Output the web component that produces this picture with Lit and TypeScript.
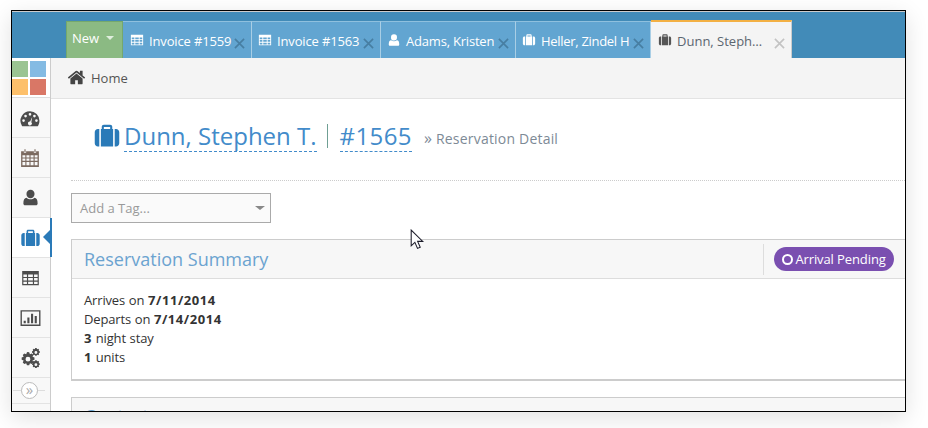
import { LitElement, html, css, svg } from "lit";
import { customElement } from "lit/decorators.js";

const table = svg`<path fill="currentColor" fill-rule="evenodd" d="M1 2h14v12H1zM2 5v2h3V5zm4 0v2h4V5zm5 0v2h3V5zM2 8v2h3V8zm4 0v2h4V8zm5 0v2h3V8zM2 11v2h3v-2zm4 0v2h4v-2zm5 0v2h3v-2z"/>`;
const user = svg`<path fill="currentColor" d="M8 1.5a3.4 3.4 0 0 1 3.4 3.6A3.4 3.4 0 0 1 8 8.600 3.4 3.4 0 0 1 4.600 5 3.400 3.400 0 0 1 8 1.500zM4.700 8.200C5.600 9 6.700 9.500 8 9.500s2.400-.5 3.300-1.300c1.800.1 2.700 1.700 2.700 4.800 0 .9-.6 1.500-1.400 1.500H3.400C2.600 14.500 2 13.900 2 13c0-3.100.9-4.700 2.700-4.800z"/>`;
const case_ = svg`<path fill="currentColor" fill-rule="evenodd" d="M5 4V2.700C5 2 5.500 1.500 6.200 1.500h3.600c.7 0 1.200.5 1.200 1.200V4h.5v10h-7V4zm1.200 0h3.600V2.800H6.200zM3.600 4v10h-.8C1.800 14 1 13.200 1 12.200V5.800C1 4.800 1.800 4 2.800 4zm8.800 0h.8c1 0 1.800.8 1.800 1.800v6.400c0 1-.8 1.800-1.800 1.800h-.8z"/>`;
const home = svg`<path fill="currentColor" d="M1472 992v480q0 26-19 45t-45 19h-384v-384h-256v384h-384q-26 0-45-19t-19-45v-480q0-1 .5-3t.5-3l575-474 575 474q1 2 1 6zm223-69l-62 74q-8 9-21 11h-3q-13 0-21-7l-692-577-692 577q-12 8-24 7-13-2-21-11l-62-74q-8-10-7-23.500t11-21.500l719-599q32-26 76-26t76 26l244 204v-195q0-14 9-23t23-9h192q14 0 23 9t9 23v408l219 182q10 8 11 21.500t-7 23.500z"/>`;
const gauge = svg`<path fill="currentColor" fill-rule="evenodd" d="M9 1.500a8.500 8.500 0 0 1 8.500 8.500c0 1.700-.5 3.300-1.300 4.600-.2.300-.5.400-.8.400H2.600c-.3 0-.6-.1-.8-.4A8.500 8.500 0 0 1 9 1.500zM9 3a1.200 1.200 0 1 0 0 2.400A1.200 1.200 0 0 0 9 3zM5 4.600a1.200 1.200 0 1 0 0 2.400 1.200 1.200 0 0 0 0-2.400zm8 0A1.200 1.200 0 1 0 13 7a1.200 1.200 0 0 0 0-2.400zM3.200 8.600a1.200 1.200 0 1 0 0 2.400 1.200 1.200 0 0 0 0-2.400zm11.600 0a1.200 1.200 0 1 0 0 2.400 1.200 1.200 0 0 0 0-2.400zM11 6.500 9.100 10.700a1.700 1.700 0 1 0 1.100.6z"/>`;
const cal = svg`<path fill="#7b6a60" fill-rule="evenodd" d="M1 3h2.500v1.500h2V3h7v1.500h2V3H17v14H1zM2.200 6.500v2h2.600v-2zm3.600 0v2h2.700v-2zm3.700 0v2h2.700v-2zm3.700 0v2h2.600v-2zM2.200 9.500v2h2.600v-2zm3.600 0v2h2.700v-2zm3.700 0v2h2.700v-2zm3.700 0v2h2.600v-2zM2.200 12.500v3h2.600v-3zm3.600 0v3h2.700v-3zm3.700 0v3h2.700v-3zm3.700 0v3h2.600v-3zM4 1.200h1v2.800H4zm9 0h1v2.800h-1z"/>`;
const chart = svg`<path fill="currentColor" fill-rule="evenodd" d="M.5 2h19v15H.5zm1.300 1.300v12.400h16.400V3.300zM3.500 12h2v2.500h-2zm3.500-3h2v5.500H7zM10.500 5.500h2v9h-2zm3.500 2h2v7h-2z"/>`;
const cogs = svg`<g fill="currentColor"><path fill-rule="evenodd" d="M7 4.500l1.300.3.700 1.800 1.700-.8 1.400 1.400-.8 1.700 1.800.7v2l-1.800.7.800 1.700-1.400 1.400-1.700-.8-.7 1.800h-2l-.7-1.800-1.700.8-1.400-1.400.8-1.700-1.800-.7v-2l1.800-.7-.8-1.700 1.400-1.400 1.700.8.700-1.800zM7.200 8.800a2.200 2.200 0 1 0 0 4.400 2.200 2.200 0 0 0 0-4.400z"/><path fill-rule="evenodd" d="M15 1l.5 1 1-.4.8.8-.4 1 1 .5v1.200l-1 .5.400 1-.8.800-1-.4-.5 1h-1.200l-.5-1-1 .4-.8-.8.400-1-1-.5V3.900l1-.5-.4-1 .8-.8 1 .4.500-1zm-.6 2.700a1.300 1.300 0 1 0 0 2.600 1.300 1.300 0 0 0 0-2.600z"/><path fill-rule="evenodd" d="M15 12l.5 1 1-.4.8.8-.4 1 1 .5v1.200l-1 .5.400 1-.8.800-1-.4-.5 1h-1.200l-.5-1-1 .4-.8-.8.400-1-1-.5v-1.200l1-.5-.4-1 .8-.8 1 .4.500-1zm-.6 2.700a1.300 1.300 0 1 0 0 2.600 1.300 1.300 0 0 0 0-2.600z"/></g>`;

const tabs = [
  { icon: table, label: "Invoice #1559", w: 129, ls: "-.15px", first: true },
  { icon: table, label: "Invoice #1563", w: 129, ls: "-.15px", first: false },
  { icon: user, label: "Adams, Kristen", w: 135, ls: "-.2px", first: false },
  { icon: case_, label: "Heller, Zindel H", w: 135, ls: "-.3px", first: false },
];

const navItems = [
  { vb: "0 -1.500 18 18", i: gauge, s: 20 },
  { vb: "0 0 18 18", i: cal, s: 20 },
  { vb: "0 0 16 16", i: user, s: 19 },
  { vb: "0 -.5 16 16", i: case_, s: 21, active: true },
  { vb: "0 -.5 16 16", i: table, s: 19 },
  { vb: "0 0 20 18", i: chart, s: 21 },
  { vb: "0 0 19 19", i: cogs, s: 21 },
];

@customElement("app-root")
export class AppRoot extends LitElement {
  static styles = css`
    :host { display: block; width: 928px; height: 428px; background: #fff; font-family: "Open Sans", sans-serif; color: #333; overflow: hidden; }
    .window { position: relative; margin: 10px 0 0 11px; width: 895px; height: 402px; box-sizing: border-box; border: 1px solid #000; background: #fff; box-shadow: 0 6px 22px rgba(0,0,0,.12); overflow: hidden; display: flex; flex-direction: column; }
    .top { height: 47px; flex: none; box-sizing: border-box; border-top: 1px solid #ccc; background: #428bb8; display: flex; align-items: flex-end; padding-left: 54px; }
    .new { width: 57px; height: 37px; box-sizing: border-box; background: #8bba83; border: 1px solid #75a86c; border-bottom: 0; color: #fff; font-size: 13px; display: flex; align-items: flex-start; padding: 7px 0 0 5px; gap: 7px; }
    .caret { width: 0; height: 0; border: 4px solid transparent; border-top-color: #dfeedd; border-bottom: 0; margin-top: 7px; }
    .tab { height: 37px; box-sizing: border-box; background: #62a5d1; border-top: 1px solid #8fc0de; border-right: 1px solid #a9cee5; color: #fff; font-size: 13px; display: flex; align-items: center; padding: 1px 0 0 6px; white-space: nowrap; position: relative; }
    .tab.first { padding-left: 7px; }
    .tab .ic { width: 14px; height: 14px; flex: none; margin: -2px 5px 0 0; }
    .tab .x { position: absolute; right: 6px; top: 16px; width: 11px; height: 11px; color: #477ea2; }
    .tab.cur { width: 141px; height: 38px; padding-left: 7px; background: #f4f4f4; border-top: 2px solid #f3b044; border-right: 1px solid #ccc; color: #5c6670; }
    .tab.cur .x { color: #c3c3c3; }
    .tab.cur .ic { color: #555; }
    .row { flex: 1; display: flex; min-height: 0; }
    .side { width: 39px; flex: none; box-sizing: border-box; background: #f8f8f8; border-right: 1px solid #ccc; display: flex; flex-direction: column; }
    .logo { height: 40px; flex: none; box-sizing: border-box; display: grid; grid-template-columns: 16px 16px; grid-template-rows: 16px 16px; gap: 2px; padding-top: 3px; background: #fff; border-bottom: 1px solid #ddd; }
    .logo i { display: block; }
    .nav { height: 40px; flex: none; box-sizing: border-box; border-bottom: 1px solid #e3e3e3; display: flex; align-items: center; justify-content: center; color: #4c4c4c; position: relative; padding-right: 2px; }
    .nav.active { background: #fff; color: #2a7ab8; }
    .marker { position: absolute; right: -2px; top: 0; width: 2px; height: 39px; background: #2a7ab8; }
    .marker::before { content: ""; position: absolute; right: 2px; top: 12px; border: 7px solid transparent; border-right-color: #2a7ab8; border-left: 0; }
    .nav svg { display: block; }
    .expand { height: 26px; flex: none; box-sizing: border-box; border-bottom: 1px solid #e3e3e3; display: flex; align-items: center; justify-content: center; position: relative; padding-right: 3px; }
    .expand::before { content: ""; position: absolute; left: 1px; right: 5px; top: 12px; border-top: 1px solid #ddd; }
    .circle { position: relative; width: 15px; height: 15px; border-radius: 50%; border: 1px solid #bbb; background: #fff; color: #aaa; font-size: 15px; line-height: 12px; text-align: center; }
    .main { flex: 1; min-width: 0; display: flex; flex-direction: column; overflow: hidden; }
    .crumb { height: 41px; flex: none; box-sizing: border-box; background: #f4f4f4; border-bottom: 1px solid #e3e3e3; display: flex; align-items: center; gap: 5px; padding: 0 0 1px 16px; color: #555; font-size: 13px; }
    .crumb svg { width: 19px; height: 19px; color: #444; }
    .head { height: 82px; flex: none; box-sizing: border-box; margin-left: 20px; border-bottom: 1px dotted #ccc; display: flex; align-items: flex-start; padding: 20px 0 0 22px; color: #428bca; font-size: 24px; line-height: 33px; white-space: nowrap; }
    .head svg { width: 28px; height: 28px; color: #2a7ab8; margin: 3px 3px 0 0; flex: none; }
    .dash { border-bottom: 1px dashed #428bca; height: 32px; }
    .dash.num { letter-spacing: .4px; }
    .bar { width: 1px; height: 24px; background: #6f9f94; margin: 5px 12px 0 10px; }
    .sub { color: #7d8a96; font-size: 14px; letter-spacing: .2px; margin-left: 12px; margin-top: 3px; }
    .sub span { font-size: 16px; }
    .tag { margin: 12px 0 0 20px; flex: none; width: 200px; height: 30px; box-sizing: border-box; border: 1px solid #aaa; background: #fafafa; color: #999; font-size: 13px; display: flex; align-items: center; justify-content: space-between; padding: 0 5px 1px 8px; }
    .tag i { border: 4px solid transparent; border-top-color: #888; border-bottom: 0; border-left-width: 5px; border-right-width: 5px; margin-top: 1px; }
    .panel { margin: 16px 0 0 20px; width: 860px; flex: none; box-sizing: border-box; border: 1px solid #ccc; border-bottom-width: 2px; }
    .ph { height: 39px; box-sizing: border-box; background: #f7f7f7; border-bottom: 1px solid #ddd; display: flex; align-items: center; padding-left: 12px; color: #6ba3d0; font-size: 18px; }
    .ph .pill-wrap { margin-left: 495px; border-left: 1px solid #ddd; height: 31px; padding-left: 10px; display: flex; align-items: center; }
    .pill { background: #7a4fb0; color: #fff; border-radius: 12px; height: 24px; width: 120px; box-sizing: border-box; display: flex; align-items: center; font-size: 13px; padding-left: 8px; gap: 2px; white-space: nowrap; letter-spacing: -.1px; }
    .pill i { width: 7px; height: 7px; border: 2px solid #fff; border-radius: 50%; flex: none; }
    .pb { padding: 12px 12px 11px; font-size: 13px; line-height: 19px; color: #333; height: 100px; box-sizing: border-box; letter-spacing: -.15px; word-spacing: .5px; }
    .pb b { color: #333; letter-spacing: .55px; }
    .panel.next { margin-top: 16px; height: 40px; border-bottom: 0; }
    .panel.next .ph { padding-bottom: 2px; }
    .cursor { position: absolute; left: 398px; top: 218px; width: 15px; height: 21px; }
  `;

  render() {
    return html`<div class="window">
      <div class="top">
        <div class="new">New <span class="caret"></span></div>
        ${tabs.map(t => html`<div class="tab ${t.first ? "first" : ""}" style="width:${t.w}px;letter-spacing:${t.ls}">
          <svg class="ic" viewBox="0 0 16 16">${t.icon}</svg>${t.label}
          <svg class="x" viewBox="0 0 12 12"><path d="M1 1l10 10M11 1 1 11" stroke="currentColor" stroke-width="1.800" fill="none"/></svg>
        </div>`)}
        <div class="tab cur">
          <svg class="ic" viewBox="0 0 16 16">${case_}</svg>Dunn, Steph…
          <svg class="x" viewBox="0 0 12 12"><path d="M1 1l10 10M11 1 1 11" stroke="currentColor" stroke-width="1.800" fill="none"/></svg>
        </div>
      </div>
      <div class="row">
        <div class="side">
          <div class="logo">
            <i style="background:#9bc492"></i><i style="background:#84bbe3"></i>
            <i style="background:#fdc06b"></i><i style="background:#d97766"></i>
          </div>
          ${navItems.map(n => html`<div class="nav ${n.active ? "active" : ""}">
            <svg viewBox=${n.vb} width=${n.s} height=${n.s}>${n.i}</svg>
            ${n.active ? html`<span class="marker"></span>` : ""}
          </div>`)}
          <div class="expand"><span class="circle">»</span></div>
        </div>
        <div class="main">
          <div class="crumb"><svg viewBox="0 0 1792 1792">${home}</svg>Home</div>
          <div class="head">
            <svg viewBox="0 0 16 16">${case_}</svg>
            <span class="dash">Dunn, Stephen T.</span>
            <span class="bar"></span>
            <span class="dash num">#1565</span>
            <span class="sub"><span>»</span> Reservation Detail</span>
          </div>
          <div class="tag">Add a Tag...<i></i></div>
          <div class="panel">
            <div class="ph">Reservation Summary
              <div class="pill-wrap"><div class="pill"><i></i>Arrival Pending</div></div>
            </div>
            <div class="pb">
              Arrives on <b>7/11/2014</b><br>
              Departs on <b>7/14/2014</b><br>
              <b>3</b> night stay<br>
              <b>1</b> units
            </div>
          </div>
          <div class="panel next">
            <div class="ph">Contacts</div>
          </div>
        </div>
      </div>
      <svg class="cursor" viewBox="0 0 14 20"><path d="M1 1v15l3.500-3.300 2.500 5.800 2.600-1.100-2.500-5.600H12z" fill="#fff" stroke="#1c1c2a" stroke-width="1"/></svg>
    </div>`;
  }
}
